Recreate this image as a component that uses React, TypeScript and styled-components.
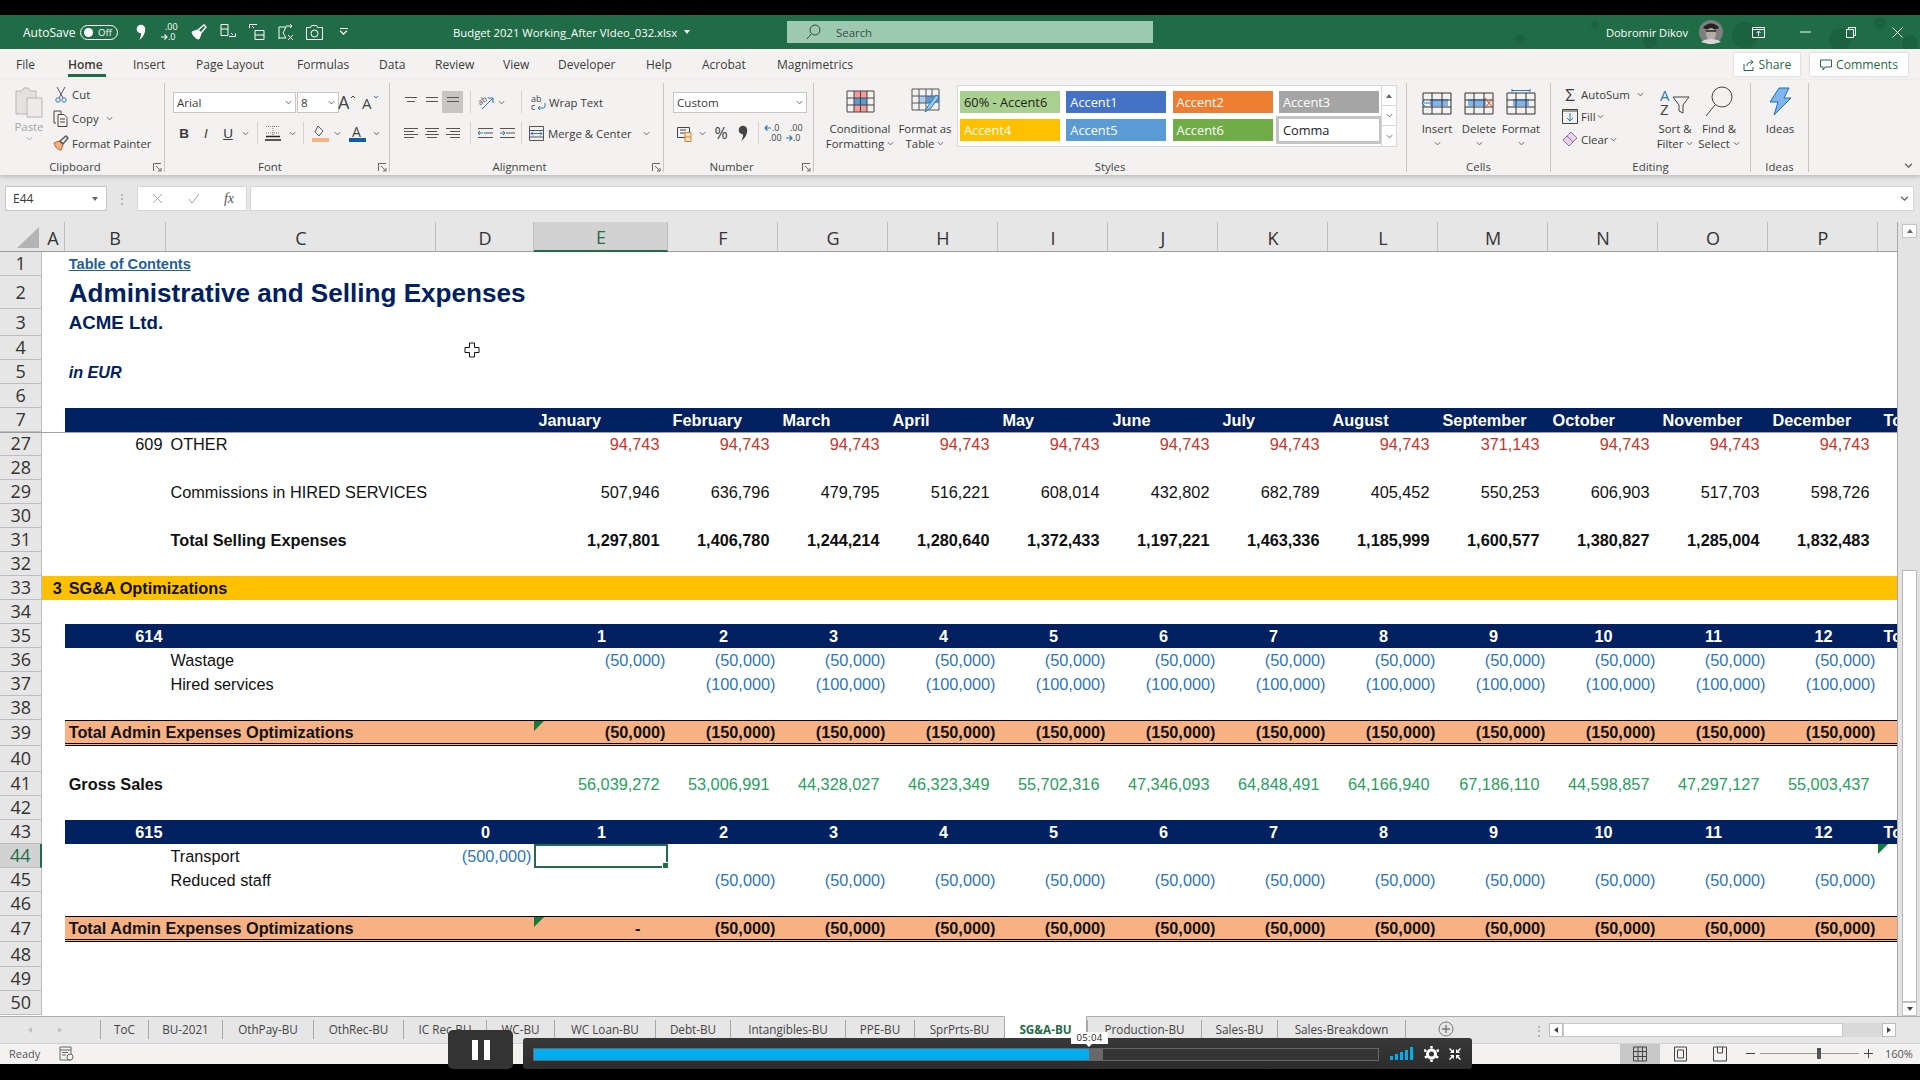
import React from 'react';
import styled, { createGlobalStyle } from 'styled-components';

const UI = `"Open Sans", "Liberation Sans", sans-serif`;
const SHEET = `"Liberation Sans", Arial, sans-serif`;
const COLS = '22.3px 101.8px 270px 98px 134px repeat(11, 110px) 19.5px';
const BAND_COLS = '101.8px 270px 98px 134px repeat(11, 110px) 19.5px';

const GlobalStyle = createGlobalStyle`
  html, body { margin: 0; padding: 0; background: #000; }
  * { box-sizing: border-box; }
`;

const Page = styled.div`
  position: relative;
  width: 1920px;
  height: 1080px;
  overflow: hidden;
  display: flex;
  flex-direction: column;
  background: #000;
  padding: 15px 0 17px;
  font-family: ${UI};
  color: #3b3a39;
`;

// title bar
const TitleBar = styled.header`
  position: relative;
  flex: 0 0 34px;
  display: flex;
  align-items: center;
  background: #1f6c46;
  color: #fff;
  font-size: 11.4px;
`;
const Doodles = styled.svg`
  position: absolute;
  right: 0;
  top: 0;
`;
const AutoSave = styled.div`
  margin-left: 23px;
  width: 57px;
  font-size: 12px;
`;
const Toggle = styled.div`
  width: 38px;
  height: 15px;
  border: 1px solid #fff;
  border-radius: 8px;
  display: flex;
  align-items: center;
  padding-left: 3px;
  gap: 5px;
  font-size: 9.5px;
  &::before {
    content: '';
    width: 9px;
    height: 9px;
    border-radius: 50%;
    background: #fff;
  }
`;
const QuickIcons = styled.div`
  margin-left: 8px;
  display: flex;
  align-items: center;
`;
const QuickSlot = styled.div`
  width: 29px;
  display: flex;
  flex-direction: column;
  align-items: center;
`;
const QatBar = styled.div`
  width: 8px;
  height: 1px;
  background: #fff;
  margin-bottom: -1px;
`;
const FileName = styled.div`
  margin-left: 95px;
  width: 245px;
  display: flex;
  align-items: center;
  gap: 6px;
  font-size: 11.3px;
  white-space: nowrap;
`;
const SearchBox = styled.div`
  margin-left: 89px;
  width: 366px;
  height: 22px;
  background: #9ec9b1;
  color: #33513f;
  display: flex;
  align-items: center;
  padding-left: 19px;
  gap: 15px;
  font-size: 11.4px;
  position: relative;
`;
const UserArea = styled.div`
  margin-left: auto;
  display: flex;
  align-items: center;
  position: relative;
  padding-right: 11px;
`;
const UserName = styled.div`
  font-size: 11.1px;
  margin-right: 11px;
  white-space: nowrap;
`;
const WinSlot = styled.div<{ $w: number }>`
  width: ${p => p.$w}px;
  display: flex;
  justify-content: center;
`;

// tab strip
const TabStrip = styled.nav`
  flex: 0 0 31px;
  background: #f3f2f1;
  display: flex;
  align-items: center;
  padding-left: 16px;
  font-size: 12px;
  position: relative;
`;
const MenuTab = styled.div<{ $w: number; $active?: boolean }>`
  width: ${p => p.$w}px;
  flex: none;
  height: 100%;
  display: flex;
  align-items: center;
  white-space: nowrap;
  position: relative;
  ${p => p.$active && `
    font-weight: 600;
    &::after {
      content: '';
      position: absolute;
      left: 0;
      width: 38px;
      bottom: 3px;
      height: 3px;
      background: #1f6c46;
    }
  `}
`;
const ShareBtn = styled.div<{ $w: number; $ml: number }>`
  width: ${p => p.$w}px;
  margin-left: ${p => p.$ml}px;
  height: 23px;
  flex: none;
  background: #fff;
  box-shadow: 0 0 2px rgba(0, 0, 0, 0.2);
  color: #1f6c46;
  font-size: 12.2px;
  display: flex;
  align-items: center;
  justify-content: center;
  gap: 4px;
`;

// ribbon
const Ribbon = styled.section`
  flex: 0 0 95px;
  background: #f3f2f1;
  padding-top: 3px;
  display: flex;
  box-shadow: 0 2px 4px rgba(0, 0, 0, 0.18);
  position: relative;
  z-index: 2;
  font-size: 11.4px;
  white-space: nowrap;
`;
const GroupBox = styled.div<{ $w: number; $line?: boolean }>`
  width: ${p => p.$w}px;
  height: 89px;
  flex: none;
  display: flex;
  flex-direction: column;
  border-right: ${p => (p.$line === false ? 'none' : '1px solid #c8c6c4')};
`;
const GroupBody = styled.div<{ $pl?: number }>`
  height: 79px;
  display: flex;
  padding-left: ${p => p.$pl ?? 0}px;
`;
const LabelRow = styled.div`
  height: 10px;
  line-height: 10px;
  display: flex;
  align-items: center;
  color: #444;
`;
const LabelText = styled.div`
  flex: 1;
  text-align: center;
`;
const Launcher = styled.div`
  width: 14px;
  display: flex;
  justify-content: center;
`;
const PasteCol = styled.div`
  width: 50px;
  padding: 4px 0 0 8px;
  display: flex;
  flex-direction: column;
  align-items: center;
  color: #a6a6a6;
  line-height: 15px;
  gap: 1px;
`;
const MiniCol = styled.div<{ $w?: number; $gap: number }>`
  ${p => p.$w && `width: ${p.$w}px;`}
  flex: none;
  display: flex;
  flex-direction: column;
  gap: ${p => p.$gap}px;
`;
const MiniRow = styled.div`
  height: 22px;
  display: flex;
  align-items: center;
`;
const Slot = styled.div<{ $w: number }>`
  width: ${p => p.$w}px;
  flex: none;
  display: flex;
  justify-content: center;
  align-items: center;
  svg { flex: none; }
`;
const StyleLetter = styled(Slot)`
  font-size: 13.5px;
  font-family: ${SHEET};
`;
const Active = styled(Slot)`
  background: #c8c6c4;
  height: 22px;
`;
const FixedText = styled.div<{ $w: number }>`
  width: ${p => p.$w}px;
  flex: none;
`;
const Sep = styled.div<{ $l: number; $r: number }>`
  width: 1px;
  height: 22px;
  background: #d4d2d0;
  flex: none;
  margin: 0 ${p => p.$r}px 0 ${p => p.$l}px;
`;
const ControlStack = styled.div<{ $pt: number; $gap: number }>`
  padding-top: ${p => p.$pt}px;
  display: flex;
  flex-direction: column;
  gap: ${p => p.$gap}px;
`;
const Select = styled.div<{ $w: number; $mr?: number }>`
  width: ${p => p.$w}px;
  margin-right: ${p => p.$mr ?? 0}px;
  height: 21px;
  flex: none;
  background: #fff;
  border: 1px solid #c8c6c4;
  display: flex;
  align-items: center;
  justify-content: space-between;
  padding: 0 3px;
  font-size: 11.6px;
`;
const BigBtn = styled.div<{ $w: number }>`
  width: ${p => p.$w}px;
  flex: none;
  display: flex;
  flex-direction: column;
  align-items: center;
  line-height: 15px;
`;
const BigIcon = styled.div`
  height: 37.5px;
  display: flex;
  align-items: center;
  justify-content: center;
`;
const BigLine = styled.div`
  height: 15px;
  display: flex;
  align-items: center;
  gap: 3px;
`;
const Gallery = styled.div`
  width: 440px;
  height: 62px;
  margin: 2px 0 0 1px;
  background: #fff;
  border: 1px solid #dad8d6;
  display: flex;
  justify-content: space-between;
  padding: 5px 0 0 2px;
`;
const GalleryGrid = styled.div`
  display: grid;
  grid-template-columns: repeat(4, 100px);
  grid-auto-rows: 22px;
  gap: 5.5px 6.3px;
`;
const StyleCell = styled.div<{ $bg: string; $dark?: boolean; $picked?: boolean }>`
  background: ${p => p.$bg};
  color: ${p => (p.$dark ? '#1d1d1d' : '#fff')};
  font-size: 12.8px;
  display: flex;
  align-items: center;
  padding-left: 4px;
  ${p => p.$picked && `outline: 3px solid #c4c4c4; outline-offset: 0;`}
`;
const Spin = styled.div`
  width: 15px;
  margin-top: -5px;
  display: flex;
  flex-direction: column;
  border-left: 1px solid #dad8d6;
`;
const SpinBtn = styled.div`
  height: 20px;
  border-bottom: 1px solid #dad8d6;
  display: flex;
  align-items: center;
  justify-content: center;
  &:last-child { border-bottom: none; }
`;
const Collapse = styled.div`
  position: absolute;
  right: 7px;
  bottom: 2px;
`;

// formula bar
const FormulaBar = styled.div`
  flex: 0 0 47px;
  background: #e6e6e6;
  display: flex;
  align-items: center;
  padding: 0 6px 0 5px;
  font-size: 12px;
`;
const NameBox = styled.div`
  width: 102px;
  height: 25px;
  background: #fff;
  border: 1px solid #c6c6c6;
  display: flex;
  align-items: center;
  justify-content: space-between;
  padding: 0 7px;
`;
const Dots = styled.div`
  width: 30px;
  text-align: center;
  color: #9a9a9a;
  letter-spacing: 0;
`;
const FxBox = styled.div`
  width: 110px;
  height: 25px;
  background: #fff;
  border: 1px solid #d6d6d6;
  display: flex;
  align-items: center;
`;
const FxMark = styled.span`
  font-family: "Liberation Serif", serif;
  font-style: italic;
  font-size: 14px;
  color: #555;
`;
const FormulaInput = styled.div`
  margin-left: 3px;
  flex: 1;
  height: 25px;
  background: #fff;
  border: 1px solid #d6d6d6;
  display: flex;
  align-items: center;
  justify-content: flex-end;
  padding-right: 4px;
`;

// sheet
const Sheet = styled.main`
  flex: 0 0 793.6px;
  display: grid;
  grid-template-columns: 1fr 22px;
  grid-template-rows: minmax(0, 1fr);
  background: #fff;
  min-height: 0;
`;
const Grid = styled.div`
  display: flex;
  flex-direction: column;
  overflow: hidden;
  min-height: 0;
  border-right: 1px solid #a8a8a8;
  font-family: ${SHEET};
  font-size: 16.3px;
  color: #111;
`;
const ColHead = styled.div`
  flex: 0 0 29.6px;
  min-height: 0;
  display: flex;
  background: #e6e6e6;
  border-bottom: 1px solid #9f9f9f;
  font-family: ${UI};
  font-size: 18px;
  line-height: 1;
`;
const Corner = styled.div`
  width: 42.4px;
  flex: none;
  display: flex;
  justify-content: flex-end;
  padding: 5px 3px 0 0;
`;
const ColLetters = styled.div`
  flex: 1;
  display: grid;
  grid-template-columns: ${COLS};
`;
const Letter = styled.div<{ $on?: boolean }>`
  display: flex;
  align-items: center;
  justify-content: center;
  padding-top: 3px;
  border-right: 1px solid #bdbdbd;
  color: ${p => (p.$on ? '#1f6c46' : '#333')};
  ${p => p.$on && `background: #d2d2d2; border-bottom: 2px solid #1f6c46; margin-bottom: -1px;`}
`;
const RowLine = styled.div<{ $h: number; $freeze?: boolean }>`
  flex: 0 0 ${p => p.$h}px;
  min-height: 0;
  display: flex;
  line-height: 1;
  ${p => p.$freeze && `box-shadow: 0 1px 0 #9f9f9f; z-index: 1;`}
`;
const RowNum = styled.div<{ $on?: boolean }>`
  width: 42.4px;
  flex: none;
  background: ${p => (p.$on ? '#d2d2d2' : '#e6e6e6')};
  color: ${p => (p.$on ? '#1f6c46' : '#333')};
  border-bottom: 1px solid #bdbdbd;
  border-right: ${p => (p.$on ? '2px solid #1f6c46' : '1px solid #bdbdbd')};
  font-family: ${UI};
  font-size: 18px;
  display: flex;
  align-items: center;
  justify-content: center;
`;
const ACell = styled.div<{ $fill?: boolean }>`
  width: 22.3px;
  flex: none;
  display: flex;
  align-items: center;
  justify-content: flex-end;
  padding: 1px 3px 0 0;
  font-weight: 700;
  ${p => p.$fill && `background: #ffc000;`}
`;
type Tone = 'navy' | 'orange' | 'amber';
const Band = styled.div<{ $tone?: Tone }>`
  flex: 1;
  display: grid;
  grid-template-columns: ${BAND_COLS};
  grid-template-rows: minmax(0, 1fr);
  align-items: stretch;
  overflow: hidden;
  ${p => p.$tone === 'navy' && `background: #002060; color: #fff; font-weight: 700;`}
  ${p => p.$tone === 'amber' && `background: #ffc000; font-weight: 700;`}
  ${p => p.$tone === 'orange' && `
    background: #f8b183;
    font-weight: 700;
    border-top: 1px solid #000;
    border-bottom: 3px double #000;
  `}
`;
const Cell = styled.div<{ $align?: 'left' | 'right' | 'center'; $pad?: number; $color?: string; $bold?: boolean; $flag?: boolean; $picked?: boolean }>`
  position: relative;
  display: flex;
  align-items: center;
  white-space: nowrap;
  min-width: 0;
  padding-top: 2px;
  justify-content: ${p => (p.$align === 'right' ? 'flex-end' : p.$align === 'center' ? 'center' : 'flex-start')};
  ${p => (p.$align === 'right' ? `padding-right: ${p.$pad ?? 4}px;` : p.$align === 'center' ? '' : `padding-left: ${p.$pad ?? 4}px;`)}
  ${p => p.$color && `color: ${p.$color};`}
  ${p => p.$bold && `font-weight: 700;`}
  ${p => p.$flag && `
    &::before {
      content: '';
      position: absolute;
      left: 0;
      top: 0;
      border-style: solid;
      border-width: 10px 10px 0 0;
      border-color: #107c3a transparent transparent transparent;
    }
  `}
  ${p => p.$picked && `
    border: 2px solid #1f6c46;
    &::after {
      content: '';
      position: absolute;
      right: -3px;
      bottom: -3px;
      width: 5px;
      height: 5px;
      background: #1f6c46;
      border: 1px solid #fff;
    }
  `}
`;
const TocLink = styled.span`
  color: #1f5f9e;
  font-weight: 700;
  font-size: 14.6px;
  text-decoration: underline;
`;
const SheetTitle = styled.span`
  color: #002060;
  font-weight: 700;
  font-size: 26.1px;
`;
const SubTitle = styled.span`
  color: #002060;
  font-weight: 700;
  font-size: 18.7px;
`;
const Unit = styled.span`
  color: #002060;
  font-weight: 700;
  font-style: italic;
  font-size: 16.2px;
`;
const VScroll = styled.div`
  background: #e3e3e3;
  display: flex;
  flex-direction: column;
  padding: 2px 3px 0 4px;
`;
const ScrollBtn = styled.div`
  height: 14px;
  background: #fff;
  border: 1px solid #c4c4c4;
  flex: none;
  display: flex;
  align-items: center;
  justify-content: center;
`;
const VGap = styled.div<{ $h: number }>`
  flex: 0 0 ${p => p.$h}px;
`;
const VThumb = styled.div`
  flex: 1;
  background: #fff;
  border: 1px solid #b8b8b8;
`;

// sheet tabs
const SheetTabs = styled.div`
  flex: 0 0 28px;
  background: #e6e6e6;
  border-top: 1px solid #ababab;
  border-bottom: 1px solid #d0d0d0;
  display: flex;
  align-items: stretch;
  font-size: 11.7px;
  color: #444;
`;
const TabNav = styled.div`
  width: 100px;
  flex: none;
  display: flex;
  align-items: center;
  padding-left: 26px;
  gap: 22px;
`;
const SheetTab = styled.div<{ $w: number; $on?: boolean }>`
  width: ${p => p.$w}px;
  flex: none;
  display: flex;
  align-items: center;
  justify-content: center;
  white-space: nowrap;
  border-left: 1px solid #a8a8a8;
  ${p => p.$on
    ? `background: #fff; color: #1f6c46; font-weight: 700; margin-top: -1px; padding-bottom: 2px; border-right: 1px solid #a8a8a8; border-top: 1px solid #fff;`
    : `margin: 3px 0 4px;`}
`;
const AddSheet = styled.div`
  width: 128px;
  flex: none;
  display: flex;
  align-items: center;
  padding-left: 32px;
  border-left: 1px solid #a8a8a8;
  margin: 3px 0 4px;
`;
const SplitDots = styled.div`
  width: 15px;
  flex: none;
  color: #9a9a9a;
  display: flex;
  align-items: center;
`;
const HScroll = styled.div`
  margin: 6px 0 6px 1px;
  width: 347px;
  display: flex;
  background: #d9d9d9;
`;
const HBtn = styled.div`
  width: 14px;
  flex: none;
  background: #fff;
  border: 1px solid #bcbcbc;
  display: flex;
  align-items: center;
  justify-content: center;
`;
const HThumb = styled.div`
  width: 280px;
  background: #fff;
  border: 1px solid #c8c8c8;
`;
const HRest = styled.div`
  flex: 1;
`;

// status bar
const StatusBar = styled.footer`
  flex: 0 0 20px;
  background: #f3f2f1;
  display: flex;
  align-items: center;
  padding-left: 9px;
  font-size: 11px;
  color: #555;
`;
const ViewBtn = styled.div<{ $on?: boolean; $w: number }>`
  width: ${p => p.$w}px;
  height: 20px;
  flex: none;
  display: flex;
  align-items: center;
  justify-content: center;
  ${p => p.$on && `background: #c8c8c8;`}
`;
const StatusRight = styled.div`
  margin-left: auto;
  display: flex;
  align-items: center;
`;
const ZoomMinus = styled.svg`
  margin-left: 5.5px;
`;
const ZoomTrack = styled.div`
  width: 99px;
  height: 1px;
  background: #999;
  position: relative;
  margin: 0 5px;
  &::after {
    content: '';
    position: absolute;
    left: 57px;
    top: -5px;
    width: 4px;
    height: 11px;
    background: #555;
  }
`;
const ZoomPct = styled.div`
  margin-left: 12.5px;
  width: 35px;
`;

// recording player on top
const PauseBtn = styled.div`
  position: absolute;
  left: 448px;
  top: 1030px;
  width: 65px;
  height: 39px;
  background: #333;
  border-radius: 5px;
  z-index: 5;
  display: flex;
  justify-content: center;
  align-items: center;
  gap: 6px;
  i {
    width: 6px;
    height: 20px;
    background: #fff;
  }
`;
const Player = styled.div`
  position: absolute;
  left: 523px;
  top: 1038px;
  width: 949px;
  height: 31px;
  background: linear-gradient(#383838, #2c2c2c);
  border-radius: 3px;
  z-index: 5;
  display: flex;
  align-items: center;
  padding-left: 10px;
`;
const Track = styled.div`
  position: relative;
  width: 846px;
  height: 13px;
  border: 1px solid #666;
  background: #343434;
  display: flex;
  margin-top: 1px;
`;
const Played = styled.div`
  background: #00adef;
`;
const Buffered = styled.div`
  background: #686868;
`;
const TimeTip = styled.div`
  position: absolute;
  left: 537px;
  top: -17px;
  width: 37px;
  height: 12px;
  background: #fff;
  color: #222;
  font-size: 9.6px;
  line-height: 12px;
  text-align: center;
  letter-spacing: 0.3px;
  &::after {
    content: '';
    position: absolute;
    left: 15px;
    top: 12px;
    border-style: solid;
    border-width: 3px 3px 0 3px;
    border-color: #fff transparent transparent transparent;
  }
`;
const PlayerIcons = styled.div`
  display: flex;
  align-items: center;
  margin-left: 11px;
  gap: 10px;
`;
const Pointer = styled.svg`
  position: absolute;
  left: 464px;
  top: 342px;
  z-index: 4;
`;

// icons
const Chev = ({ c = '#605e5c', s = 7 }: { c?: string; s?: number }) => (
  <svg width={s} height={s} viewBox="0 0 8 8"><path d="M1 2.5l3 3 3-3" fill="none" stroke={c} strokeWidth="1.1" /></svg>
);
const CommaMark = ({ c = '#444', h = 17 }: { c?: string; h?: number }) => (
  <svg width={h * 0.7} height={h} viewBox="0 0 14 20"><circle cx="7" cy="6" r="5" fill={c} /><path d="M12 6c0 6-3 10-7 13 2-4 2.5-7 2-9z" fill={c} /></svg>
);
const DecMark = ({ c = '#444', arrow = '#2e75b6', flip = false }: { c?: string; arrow?: string; flip?: boolean }) => (
  <svg width="20" height="20" viewBox="0 0 20 20" fontFamily={UI} fontSize="9" fill={c}>
    {flip ? (
      <>
        <text x="8" y="8">.0</text><text x="5" y="18">.00</text>
        <path d="M7 5H1m2.500-2.500L1 5l2.500 2.500" fill="none" stroke={arrow} strokeWidth="1.2" />
      </>
    ) : (
      <>
        <text x="5" y="8">.00</text><text x="8" y="18">.0</text>
        <path d="M1 15h6M4.500 12.500L7 15l-2.500 2.500" fill="none" stroke={arrow} strokeWidth="1.2" />
      </>
    )}
  </svg>
);
const Brush = ({ c = '#fff', tip }: { c?: string; tip?: string }) => (
  <svg width="18" height="18" viewBox="0 0 18 18">
    <path d="M2 9l5-2 4 4-2 5C6 16 3 13 2 9z" fill={tip ?? c} stroke={tip ? '#c55a11' : c} />
    <path d="M8 7l6-5 2 2-5 6z" fill="none" stroke={tip ? '#555' : c} strokeWidth="1.4" />
  </svg>
);
const WhiteBoxes = ({ kind }: { kind: number }) => (
  <svg width="18" height="18" viewBox="0 0 18 18" fill="none" stroke="#fff" strokeWidth="1">
    {kind === 0 && <><path d="M2 1.500h7v11H2z" /><path d="M2 6h7" /><path d="M10 13.500h6.500v-3M12 10l2 2" /></>}
    {kind === 1 && <><path d="M7 7.500h9v9H7zM7 12h9" /><path d="M1.500 5V1.500H9M4 3l2 2" /></>}
    {kind === 2 && <><path d="M2 4v12M2 4h7l-3 6 3 5H2" /><path d="M11 12l5 5m0-5l-5 5M9 3h6m-2-2l2 2-2 2" /></>}
  </svg>
);
const Camera = () => (
  <svg width="17" height="15" viewBox="0 0 17 15" fill="none" stroke="#fff"><path d="M.500 2.500h4l1-2h5l1 2h5v12H.500z" /><circle cx="8.500" cy="8.500" r="3.500" /></svg>
);
const Scissors = () => (
  <svg width="12" height="17" viewBox="0 0 12 17" fill="none"><path d="M2 1l6 11M10 1L4 12" stroke="#555" /><circle cx="3" cy="14" r="2.200" stroke="#2e75b6" /><circle cx="9" cy="14" r="2.200" stroke="#2e75b6" /></svg>
);
const CopyIcon = () => (
  <svg width="17" height="17" viewBox="0 0 17 17" fill="none" stroke="#444"><path d="M3 13H1V1h7v3" /><path d="M5 4.500h6l3 3v9H5zM7 9h5M7 12h5" /></svg>
);
const PasteIcon = () => (
  <svg width="28" height="31" viewBox="0 0 28 31" fill="#e4e2e0" stroke="#b8b6b4"><path d="M1 4h6l2-3h4l2 3h6v23H1z" /><path d="M12 11h15v19H12z" fill="#ecebea" /></svg>
);
const LauncherIcon = () => (
  <svg width="9" height="9" viewBox="0 0 9 9" fill="none" stroke="#666"><path d="M.500 8V.500H8M3 3l5 5M8 5v3H5" /></svg>
);
const FontGrow = ({ up }: { up: boolean }) => (
  <svg width="20" height="18" viewBox="0 0 20 18" fontFamily={UI}>
    <text x="0" y="16" fontSize={up ? 18 : 15} fill="#444">A</text>
    <path d={up ? 'M13 5l2-2 2 2' : 'M12 3l2 2 2-2'} fill="none" stroke={up ? '#444' : '#2e75b6'} />
  </svg>
);
const BorderIcon = () => (
  <svg width="16" height="16" viewBox="0 0 16 16"><path d="M1 1.500h14M1 8h14M8 1v10" stroke="#777" strokeDasharray="1 1" /><path d="M1 11.500h14M0 15h16" stroke="#222" strokeWidth="1.500" /></svg>
);
const FillIcon = () => (
  <svg width="17" height="17" viewBox="0 0 17 17"><path d="M6 1l5 5-4 5-4-4z" fill="none" stroke="#555" /><rect y="13" width="17" height="4" fill="#f4b183" /></svg>
);
const ColorIcon = () => (
  <svg width="17" height="17" viewBox="0 0 17 17" fontFamily={UI}><text x="3" y="12" fontSize="14" fill="#444">A</text><rect y="13" width="17" height="4" fill="#0f5ba7" /></svg>
);
const AlignLines = ({ widths, off }: { widths: number[]; off: 'l' | 'c' | 'r' }) => (
  <svg width="14" height="14" viewBox="0 0 14 14" stroke="#555">
    {widths.map((w, i) => {
      const x = off === 'l' ? 0 : off === 'r' ? 14 - w : (14 - w) / 2;
      return <path key={i} d={`M${x} ${2.5 + i * (widths.length > 2 ? 3 : 4)}h${w}`} />;
    })}
  </svg>
);
const OrientIcon = () => (
  <svg width="17" height="17" viewBox="0 0 17 17" fontFamily={UI}><text x="0" y="9" fontSize="8" fill="#444" transform="rotate(-35 5 7)">ab</text><path d="M4 15L15 4m-5 0h5v5" fill="none" stroke="#2e75b6" /></svg>
);
const WrapIcon = () => (
  <svg width="15" height="17" viewBox="0 0 15 17" fontFamily={UI}><text x="0" y="8" fontSize="9" fill="#444">ab</text><text x="0" y="16" fontSize="9" fill="#444">c</text><path d="M14 9v3a2 2 0 0 1-2 2H7m2-2l-2 2 2 2" fill="none" stroke="#2e75b6" /></svg>
);
const MergeIcon = () => (
  <svg width="15" height="15" viewBox="0 0 15 15" fill="none"><path d="M.500.500h14v14H.500z" stroke="#555" /><path d="M.500 4.500h14M.500 11h14" stroke="#555" /><path d="M2 7.500h11M4 5.500l-2 2 2 2M11 5.500l2 2-2 2" stroke="#2e75b6" /></svg>
);
const IndentIcon = ({ rev }: { rev?: boolean }) => (
  <svg width="15" height="14" viewBox="0 0 15 14" fill="none">
    <path d="M6 7h9M0 2.500h15M0 11.500h15" stroke="#555" />
    <path d={rev ? 'M5 7H0m2-2L0 7l2 2' : 'M0 7h5M3 5l2 2-2 2'} stroke="#2e75b6" />
  </svg>
);
const Accounting = () => (
  <svg width="15" height="17" viewBox="0 0 15 17" fill="none"><path d="M.500 2.500h12v10H.500zM3 5h6M3 8h6" stroke="#444" /><path d="M8 7.500h6v9H8z" fill="#fbe3c9" stroke="#d9822b" /><path d="M8 12h6" stroke="#d9822b" /></svg>
);
const CondIcon = () => (
  <svg width="29" height="23" viewBox="0 0 29 23">
    <rect x="8" y="1" width="13" height="7" fill="#f69a9a" /><rect x="8" y="8" width="13" height="7" fill="#5b9bd5" /><rect x="8" y="15" width="13" height="7" fill="#f69a9a" />
    <path d="M1 1h27v21H1zM8 1v21M14.500 1v21M21 1v21M1 8h27M1 15h27" fill="none" stroke="#444" />
  </svg>
);
const TableIcon = () => (
  <svg width="29" height="27" viewBox="0 0 29 27">
    <rect x="15" y="8" width="13" height="7" fill="#5b9bd5" /><rect x="8" y="8" width="8" height="7" fill="#a9cdf0" />
    <path d="M1 1h27v21H1zM8 1v21M15 1v21M21 1v7M1 8h27M1 15h20" fill="none" stroke="#555" />
    <path d="M14 24l3-6 8-11 3 2-8 11z" fill="#9ec5e8" stroke="#2e75b6" />
  </svg>
);
const CellsIcon = ({ kind }: { kind: 'insert' | 'delete' | 'format' }) => (
  <svg width="32" height="26" viewBox="0 0 32 26">
    {kind === 'format' && <path d="M7 1.500h18M7 0v3M25 0v3" stroke="#2e75b6" fill="none" />}
    <rect x={kind === 'insert' ? 9 : kind === 'delete' ? 5 : 8} y="10" width={kind === 'format' ? 16 : 18} height="7" fill="#7fb5ec" />
    <path d="M2 4h28v21H2zM11 4v21M21 4v21M2 11h28M2 18h28" fill="none" stroke="#333" />
    {kind === 'insert' && <path d="M10 14H1m4-4l-4 4 4 4" fill="#fff" stroke="#2e75b6" />}
    {kind === 'delete' && <path d="M22 9l8 10m0-10l-8 10" stroke="#e0603a" strokeWidth="1.200" fill="none" />}
  </svg>
);
const FillDown = () => (
  <svg width="16" height="15" viewBox="0 0 16 15" fill="none"><path d="M.500.500h15v14H.500z" stroke="#444" /><path d="M.500 2h15" stroke="#444" /><path d="M8 4v8M5 9l3 3 3-3" stroke="#2e75b6" /></svg>
);
const Eraser = () => (
  <svg width="16" height="16" viewBox="0 0 16 16"><path d="M1 9l8-8 6 6-8 8z" fill="#e6d4ea" stroke="#9a6aa8" /><path d="M5 5l6 6" stroke="#9a6aa8" /></svg>
);
const SortIcon = () => (
  <svg width="30" height="28" viewBox="0 0 30 28" fontFamily={UI} fontSize="15"><text x="0" y="13" fill="#2e75b6">A</text><text x="0" y="27" fill="#444">Z</text><path d="M13 9h16l-6 8v8l-4-2v-6z" fill="none" stroke="#444" /></svg>
);
const FindIcon = () => (
  <svg width="30" height="31" viewBox="0 0 30 31" fill="none" stroke="#444"><circle cx="18" cy="11" r="10" /><path d="M11 19L2 30" /></svg>
);
const Bolt = () => (
  <svg width="23" height="29" viewBox="0 0 23 29"><path d="M10 1h10l-5 10h7L5 28l4-13H1z" fill="#7fb5ec" stroke="#1f6fb5" /></svg>
);
const Avatar = () => (
  <svg width="24" height="24" viewBox="0 0 24 24">
    <circle cx="12" cy="12" r="12" fill="#7f7f7f" />
    <path d="M4 8c3-6 13-6 16 0-4 2-12 2-16 0z" fill="#222" />
    <ellipse cx="12" cy="14" rx="5" ry="6" fill="#b6aca2" />
    <path d="M7 11h10" stroke="#222" strokeWidth="1.500" />
    <path d="M2 22c4-4 16-4 20 0l-8 2h-4z" fill="#d8d8d8" />
  </svg>
);
const Triangle = ({ dir, c = '#666' }: { dir: 'u' | 'd' | 'l' | 'r'; c?: string }) => {
  const d = { u: 'M1 6l3-4 3 4z', d: 'M1 2l3 4 3-4z', l: 'M6 1L2 4l4 3z', r: 'M2 1l4 3-4 3z' }[dir];
  return <svg width="8" height="8" viewBox="0 0 8 8"><path d={d} fill={c} /></svg>;
};
const SignalBars = () => (
  <svg width="24" height="13" viewBox="0 0 24 13" fill="#00adef">
    <rect x="0" y="9" width="3" height="4" /><rect x="5" y="7" width="3" height="6" /><rect x="10" y="5" width="3" height="8" /><rect x="15" y="3" width="3" height="10" /><rect x="20" y="0" width="3" height="13" />
  </svg>
);
const Gear = () => (
  <svg width="15" height="16" viewBox="0 0 15 16"><circle cx="7.500" cy="8" r="4" fill="none" stroke="#fff" strokeWidth="3" /><path d="M7.500 0v16M0 4l15 8M15 4L0 12" stroke="#fff" strokeWidth="2.500" strokeDasharray="2.500 11 2.500" /></svg>
);
const Shrink = () => (
  <svg width="12" height="12" viewBox="0 0 12 12" fill="#fff"><path d="M0 1l1-1 2.500 2.500L5 1v4H1l1.500-1.500zM12 1l-1-1-2.500 2.500L7 1v4h4L9.500 3.500zM0 11l1 1 2.500-2.500L5 11V7H1l1.500 1.500zM12 11l-1 1-2.500-2.500L7 11V7h4L9.500 8.500z" /></svg>
);

const Group = ({ w, label, launcher, pl, line, children }: { w: number; label: string; launcher?: boolean; pl?: number; line?: boolean; children: React.ReactNode }) => (
  <GroupBox $w={w} $line={line}>
    <GroupBody $pl={pl}>{children}</GroupBody>
    <LabelRow>
      <LabelText>{label}</LabelText>
      {launcher && <Launcher><LauncherIcon /></Launcher>}
    </LabelRow>
  </GroupBox>
);

const Big = ({ w, icon, lines, chev }: { w: number; icon: React.ReactNode; lines: string[]; chev?: boolean }) => (
  <BigBtn $w={w}>
    <BigIcon>{icon}</BigIcon>
    {lines.map((l, i) => (
      <BigLine key={i}>{l}{chev && i === lines.length - 1 && <Chev />}</BigLine>
    ))}
    {!chev && lines.length === 1 && w === 42 && <BigLine><Chev /></BigLine>}
  </BigBtn>
);

const menuTabs: [string, number][] = [
  ['File', 52], ['Home', 65], ['Insert', 63], ['Page Layout', 101], ['Formulas', 82], ['Data', 56], ['Review', 68],
  ['View', 55], ['Developer', 88], ['Help', 56], ['Acrobat', 75], ['Magnimetrics', 100],
];
const styleCells: { t: string; bg: string; dark?: boolean; picked?: boolean }[] = [
  { t: '60% - Accent6', bg: '#a9d08e', dark: true }, { t: 'Accent1', bg: '#4472c4' }, { t: 'Accent2', bg: '#ed7d31' }, { t: 'Accent3', bg: '#a5a5a5' },
  { t: 'Accent4', bg: '#ffc000' }, { t: 'Accent5', bg: '#5b9bd5' }, { t: 'Accent6', bg: '#70ad47' }, { t: 'Comma', bg: '#fff', dark: true, picked: true },
];
const sheetTabs: [string, number][] = [
  ['ToC', 48], ['BU-2021', 74], ['OthPay-BU', 91], ['OthRec-BU', 90], ['IC Rec-BU', 83], ['WC-BU', 68], ['WC Loan-BU', 101],
  ['Debt-BU', 75], ['Intangibles-BU', 115], ['PPE-BU', 69], ['SprPrts-BU', 90], ['SG&A-BU', 83], ['Production-BU', 114], ['Sales-BU', 76], ['Sales-Breakdown', 128],
];
const letters = ['A', 'B', 'C', 'D', 'E', 'F', 'G', 'H', 'I', 'J', 'K', 'L', 'M', 'N', 'O', 'P'];
const months = ['January', 'February', 'March', 'April', 'May', 'June', 'July', 'August', 'September', 'October', 'November', 'December'];
const red = '#c8342a';
const blue = '#2e75b6';
const green = '#27a060';

const otherRow = months.map((_, i) => (i === 8 ? '371,143' : '94,743'));
const hiredRow = ['507,946', '636,796', '479,795', '516,221', '608,014', '432,802', '682,789', '405,452', '550,253', '606,903', '517,703', '598,726'];
const totalRow = ['1,297,801', '1,406,780', '1,244,214', '1,280,640', '1,372,433', '1,197,221', '1,463,336', '1,185,999', '1,600,577', '1,380,827', '1,285,004', '1,832,483'];
const salesRow = ['56,039,272', '53,006,991', '44,328,027', '46,323,349', '55,702,316', '47,346,093', '64,848,491', '64,166,940', '67,186,110', '44,598,857', '47,297,127', '55,003,437'];
const repeat = (v: string, first = v) => months.map((_, i) => (i === 0 ? first : v));

// B, C, D cells then E..P values
const Numbers = ({ values, color, pad = 9, bold }: { values: string[]; color?: string; pad?: number; bold?: boolean }) => (
  <>
    {values.map((v, i) => (
      <Cell key={i} $align="right" $pad={pad} $color={color} $bold={bold}>{v}</Cell>
    ))}
  </>
);
const HeaderNumbers = () => (
  <>
    {months.map((_, i) => <Cell key={i} $align="center">{i + 1}</Cell>)}
    <Cell $pad={5}>Total</Cell>
  </>
);
const Line = ({ n, h = 24, on, fillA, aText, tone, freeze, children }: { n: number; h?: number; on?: boolean; fillA?: boolean; aText?: string; tone?: Tone; freeze?: boolean; children?: React.ReactNode }) => (
  <RowLine $h={h} $freeze={freeze}>
    <RowNum $on={on}>{n}</RowNum>
    <ACell $fill={fillA}>{aText}</ACell>
    <Band $tone={tone}>{children}</Band>
  </RowLine>
);

const App = () => {
  return (
    <Page>
      <GlobalStyle />
      <TitleBar>
        <Doodles width="420" height="34" viewBox="0 0 420 34" fill="#195c3b" opacity="0.55">
          <circle cx="20" cy="24" r="5" /><circle cx="95" cy="10" r="4" /><circle cx="150" cy="26" r="7" /><circle cx="245" cy="20" r="13" />
          <circle cx="340" cy="24" r="11" /><circle cx="380" cy="8" r="6" /><circle cx="410" cy="28" r="8" />
        </Doodles>
        <AutoSave>AutoSave</AutoSave>
        <Toggle>Off</Toggle>
        <QuickIcons>
          <QuickSlot><CommaMark c="#fff" /></QuickSlot>
          <QuickSlot><DecMark c="#fff" arrow="#fff" /></QuickSlot>
          <QuickSlot><Brush /></QuickSlot>
          <QuickSlot><WhiteBoxes kind={0} /></QuickSlot>
          <QuickSlot><WhiteBoxes kind={1} /></QuickSlot>
          <QuickSlot><WhiteBoxes kind={2} /></QuickSlot>
          <QuickSlot><Camera /></QuickSlot>
          <QuickSlot><QatBar /><Chev c="#fff" s={9} /></QuickSlot>
        </QuickIcons>
        <FileName>Budget 2021 Working_After VIdeo_032.xlsx<Triangle dir="d" c="#fff" /></FileName>
        <SearchBox>
          <svg width="15" height="16" viewBox="0 0 15 16" fill="none" stroke="#33513f"><circle cx="9" cy="6" r="5" /><path d="M5 10l-4 5" /></svg>
          Search
        </SearchBox>
        <UserArea>
          <UserName>Dobromir Dikov</UserName>
          <Avatar />
          <WinSlot $w={70}>
            <svg width="13" height="11" viewBox="0 0 13 11" fill="none" stroke="#fff"><path d="M.500.500h12v10H.500zM.500 2.500h12M6.500 9V4.500M4.500 6l2-2 2 2" /></svg>
          </WinSlot>
          <WinSlot $w={24}>
            <svg width="11" height="2" viewBox="0 0 11 2"><path d="M0 1h11" stroke="#fff" /></svg>
          </WinSlot>
          <WinSlot $w={68}>
            <svg width="10" height="11" viewBox="0 0 10 11" fill="none" stroke="#fff"><path d="M.500 2.500h7v8h-7zM2.500 2.500v-2h7v8h-2" /></svg>
          </WinSlot>
          <WinSlot $w={24}>
            <svg width="11" height="11" viewBox="0 0 11 11" stroke="#fff"><path d="M.500.500l10 10m0-10l-10 10" /></svg>
          </WinSlot>
        </UserArea>
      </TitleBar>

      <TabStrip>
        {menuTabs.map(([t, w]) => (
          <MenuTab key={t} $w={w} $active={t === 'Home'}>{t}</MenuTab>
        ))}
        <ShareBtn $w={66} $ml={857}>
          <svg width="12" height="12" viewBox="0 0 12 12" fill="none" stroke="#1f6c46"><path d="M1 5v6.500h9V8M4 7c0-3 2-4 5-4M7.500 1L10 3 7.500 5.500" /></svg>
          Share
        </ShareBtn>
        <ShareBtn $w={98} $ml={10}>
          <svg width="12" height="12" viewBox="0 0 12 12" fill="none" stroke="#1f6c46"><path d="M.500 1h11v7H5L3 11V8H.500z" /></svg>
          Comments
        </ShareBtn>
      </TabStrip>

      <Ribbon>
        <Group w={165} label="Clipboard" launcher>
          <PasteCol>
            <PasteIcon />
            Paste
            <Chev c="#a6a6a6" />
          </PasteCol>
          <MiniCol $gap={2.5}>
            <MiniRow><Slot $w={22}><Scissors /></Slot>Cut</MiniRow>
            <MiniRow><Slot $w={22}><CopyIcon /></Slot>Copy<Slot $w={22}><Chev /></Slot></MiniRow>
            <MiniRow><Slot $w={22}><Brush c="#666" tip="#f4b183" /></Slot>Format Painter</MiniRow>
          </MiniCol>
        </Group>

        <Group w={225} label="Font" launcher pl={8}>
          <ControlStack $pt={8} $gap={9}>
            <MiniRow>
              <Select $w={123} $mr={1}>Arial<Chev /></Select>
              <Select $w={42}>8<Chev /></Select>
              <Slot $w={18}><FontGrow up /></Slot>
              <Slot $w={30}><FontGrow up={false} /></Slot>
            </MiniRow>
            <MiniRow>
              <StyleLetter $w={22}><b>B</b></StyleLetter>
              <StyleLetter $w={22}><i>I</i></StyleLetter>
              <StyleLetter $w={22}><u>U</u></StyleLetter>
              <Slot $w={12}><Chev /></Slot>
              <Sep $l={6} $r={7} />
              <Slot $w={16}><BorderIcon /></Slot>
              <Slot $w={22}><Chev /></Slot>
              <Sep $l={0} $r={1} />
              <Slot $w={30}><FillIcon /></Slot>
              <Slot $w={5}><Chev /></Slot>
              <Slot $w={34}><ColorIcon /></Slot>
              <Slot $w={4}><Chev /></Slot>
            </MiniRow>
          </ControlStack>
        </Group>

        <Group w={274} label="Alignment" launcher pl={10}>
          <ControlStack $pt={8} $gap={9}>
            <MiniRow>
              <Slot $w={21}><AlignLines widths={[12, 8]} off="c" /></Slot>
              <Slot $w={21}><AlignLines widths={[12, 12]} off="c" /></Slot>
              <Active $w={21}><AlignLines widths={[12, 12]} off="c" /></Active>
              <Sep $l={7} $r={6} />
              <Slot $w={18}><OrientIcon /></Slot>
              <Slot $w={12}><Chev /></Slot>
              <Sep $l={14} $r={8} />
              <Slot $w={16}><WrapIcon /></Slot>
              <FixedText $w={80}>&nbsp;Wrap Text</FixedText>
            </MiniRow>
            <MiniRow>
              <Slot $w={21}><AlignLines widths={[14, 10, 14, 10]} off="l" /></Slot>
              <Slot $w={21}><AlignLines widths={[14, 10, 14, 10]} off="c" /></Slot>
              <Slot $w={21}><AlignLines widths={[14, 10, 14, 10]} off="r" /></Slot>
              <Sep $l={7} $r={6} />
              <Slot $w={16}><IndentIcon rev /></Slot>
              <Slot $w={28}><IndentIcon /></Slot>
              <Sep $l={0} $r={8} />
              <Slot $w={12}><MergeIcon /></Slot>
              <FixedText $w={98}>&nbsp;&nbsp;Merge &amp; Center</FixedText>
              <Slot $w={12}><Chev /></Slot>
            </MiniRow>
          </ControlStack>
        </Group>

        <Group w={150} label="Number" launcher pl={9}>
          <ControlStack $pt={8} $gap={9}>
            <MiniRow><Select $w={134}>Custom<Chev /></Select></MiniRow>
            <MiniRow>
              <Slot $w={22}><Accounting /></Slot>
              <Slot $w={14}><Chev /></Slot>
              <Slot $w={24}><span style={{ fontSize: 16 }}>%</span></Slot>
              <Slot $w={20}><CommaMark /></Slot>
              <Sep $l={5} $r={5} />
              <Slot $w={20}><DecMark flip /></Slot>
              <Slot $w={22}><DecMark /></Slot>
            </MiniRow>
          </ControlStack>
        </Group>

        <Group w={593} label="Styles" pl={12}>
          <Big w={68} icon={<CondIcon />} lines={['Conditional', 'Formatting']} chev />
          <Big w={62} icon={<TableIcon />} lines={['Format as', 'Table']} chev />
          <Gallery>
            <GalleryGrid>
              {styleCells.map(c => (
                <StyleCell key={c.t} $bg={c.bg} $dark={c.dark} $picked={c.picked}>{c.t}</StyleCell>
              ))}
            </GalleryGrid>
            <Spin>
              <SpinBtn><Triangle dir="u" /></SpinBtn>
              <SpinBtn><Chev /></SpinBtn>
              <SpinBtn><Chev /></SpinBtn>
            </Spin>
          </Gallery>
        </Group>

        <Group w={144} label="Cells" pl={9}>
          <Big w={42} icon={<CellsIcon kind="insert" />} lines={['Insert']} />
          <Big w={42} icon={<CellsIcon kind="delete" />} lines={['Delete']} />
          <Big w={42} icon={<CellsIcon kind="format" />} lines={['Format']} />
        </Group>

        <Group w={200} label="Editing" pl={11}>
          <MiniCol $w={91} $gap={0.5}>
            <MiniRow><Slot $w={16}><span style={{ fontSize: 17, lineHeight: 1 }}>Σ</span></Slot><Slot $w={3} />AutoSum<Slot $w={22}><Chev /></Slot></MiniRow>
            <MiniRow><Slot $w={16}><FillDown /></Slot><Slot $w={3} />Fill<Slot $w={10}><Chev /></Slot></MiniRow>
            <MiniRow><Slot $w={16}><Eraser /></Slot><Slot $w={3} />Clear<Slot $w={10}><Chev /></Slot></MiniRow>
          </MiniCol>
          <Big w={44} icon={<SortIcon />} lines={['Sort &', 'Filter']} chev />
          <Big w={44} icon={<FindIcon />} lines={['Find &', 'Select']} chev />
        </Group>

        <Group w={58} label="Ideas">
          <Big w={58} icon={<Bolt />} lines={['Ideas']} />
        </Group>

        <Collapse><Chev s={9} /></Collapse>
      </Ribbon>

      <FormulaBar>
        <NameBox>E44<Triangle dir="d" /></NameBox>
        <Dots>⋮</Dots>
        <FxBox>
          <Slot $w={38}><svg width="11" height="11" viewBox="0 0 11 11" stroke="#a6a6a6"><path d="M1 1l9 9m0-9l-9 9" /></svg></Slot>
          <Slot $w={36}><svg width="12" height="11" viewBox="0 0 12 11" fill="none" stroke="#a6a6a6"><path d="M1 6l3 4 7-9" /></svg></Slot>
          <Slot $w={34}><FxMark>fx</FxMark></Slot>
        </FxBox>
        <FormulaInput><Chev s={9} /></FormulaInput>
      </FormulaBar>

      <Sheet>
        <Grid>
          <ColHead>
            <Corner>
              <svg width="22" height="21" viewBox="0 0 22 21"><path d="M22 0v21H0z" fill="#b4b4b4" /></svg>
            </Corner>
            <ColLetters>
              {letters.map(l => <Letter key={l} $on={l === 'E'}>{l}</Letter>)}
              <Letter />
            </ColLetters>
          </ColHead>

          <Line n={1}><Cell><TocLink>Table of Contents</TocLink></Cell></Line>
          <Line n={2} h={33.6}><Cell><SheetTitle>Administrative and Selling Expenses</SheetTitle></Cell></Line>
          <Line n={3} h={26.4}><Cell><SubTitle>ACME Ltd.</SubTitle></Cell></Line>
          <Line n={4} />
          <Line n={5}><Cell><Unit>in EUR</Unit></Cell></Line>
          <Line n={6} />
          <Line n={7} tone="navy" freeze>
            <Cell /><Cell /><Cell />
            {months.map(m => <Cell key={m}>{m}</Cell>)}
            <Cell $pad={5}>Total</Cell>
          </Line>
          <Line n={27}>
            <Cell $align="right">609</Cell><Cell $pad={4}>OTHER</Cell><Cell />
            <Numbers values={otherRow} color={red} />
          </Line>
          <Line n={28} />
          <Line n={29}>
            <Cell /><Cell>Commissions in HIRED SERVICES</Cell><Cell />
            <Numbers values={hiredRow} />
          </Line>
          <Line n={30} />
          <Line n={31}>
            <Cell /><Cell $bold>Total Selling Expenses</Cell><Cell />
            <Numbers values={totalRow} bold />
          </Line>
          <Line n={32} />
          <Line n={33} fillA aText="3" tone="amber"><Cell>SG&amp;A Optimizations</Cell></Line>
          <Line n={34} />
          <Line n={35} tone="navy">
            <Cell $align="right">614</Cell><Cell /><Cell />
            <HeaderNumbers />
          </Line>
          <Line n={36}>
            <Cell /><Cell>Wastage</Cell><Cell />
            <Numbers values={repeat('(50,000)')} color={blue} pad={3} />
          </Line>
          <Line n={37}>
            <Cell /><Cell>Hired services</Cell><Cell /><Cell />
            <Numbers values={repeat('(100,000)').slice(1)} color={blue} pad={3} />
          </Line>
          <Line n={38} />
          <Line n={39} h={26} tone="orange">
            <Cell>Total Admin Expenses Optimizations</Cell><Cell /><Cell />
            <Cell $align="right" $pad={3} $flag>(50,000)</Cell>
            <Numbers values={repeat('(150,000)').slice(1)} pad={3} />
          </Line>
          <Line n={40} h={26} />
          <Line n={41}>
            <Cell $bold>Gross Sales</Cell><Cell /><Cell />
            <Numbers values={salesRow} color={green} />
          </Line>
          <Line n={42} />
          <Line n={43} tone="navy">
            <Cell $align="right">615</Cell><Cell />
            <Cell $align="center">0</Cell>
            <HeaderNumbers />
          </Line>
          <Line n={44} on>
            <Cell /><Cell>Transport</Cell>
            <Cell $align="right" $pad={3} $color={blue}>(500,000)</Cell>
            <Cell $picked />
            {months.slice(1).map(m => <Cell key={m} />)}
            <Cell $flag />
          </Line>
          <Line n={45}>
            <Cell /><Cell>Reduced staff</Cell><Cell /><Cell />
            <Numbers values={repeat('(50,000)').slice(1)} color={blue} pad={3} />
          </Line>
          <Line n={46} />
          <Line n={47} h={26} tone="orange">
            <Cell>Total Admin Expenses Optimizations</Cell><Cell /><Cell />
            <Cell $align="right" $pad={28} $flag>-</Cell>
            <Numbers values={repeat('(50,000)').slice(1)} pad={3} />
          </Line>
          <Line n={48} h={25} />
          <Line n={49} />
          <Line n={50} />
        </Grid>
        <VScroll>
          <ScrollBtn><Triangle dir="u" /></ScrollBtn>
          <VGap $h={332} />
          <VThumb />
          <ScrollBtn><Triangle dir="d" c="#444" /></ScrollBtn>
        </VScroll>
      </Sheet>

      <SheetTabs>
        <TabNav><Triangle dir="l" c="#c0c0c0" /><Triangle dir="r" c="#c0c0c0" /></TabNav>
        {sheetTabs.map(([t, w]) => (
          <SheetTab key={t} $w={w} $on={t === 'SG&A-BU'}>{t}</SheetTab>
        ))}
        <AddSheet>
          <svg width="16" height="16" viewBox="0 0 16 16" fill="none" stroke="#777"><circle cx="8" cy="8" r="7" /><path d="M8 4v8M4 8h8" strokeWidth="1.400" /></svg>
        </AddSheet>
        <SplitDots>⋮</SplitDots>
        <HScroll>
          <HBtn><Triangle dir="l" c="#444" /></HBtn>
          <HThumb />
          <HRest />
          <HBtn><Triangle dir="r" c="#444" /></HBtn>
        </HScroll>
      </SheetTabs>

      <StatusBar>
        Ready
        <Slot $w={52}>
          <svg width="15" height="15" viewBox="0 0 15 15" fill="none" stroke="#666"><path d="M1 1h11v13H1zM1 4h11M3 6.500h6M3 9h4" /><circle cx="11" cy="11" r="3" fill="#f3f2f1" /></svg>
        </Slot>
        <StatusRight>
          <ViewBtn $on $w={40}>
            <svg width="14" height="20" viewBox="0 0 14 20" fill="none" stroke="#444"><path d="M.500 3h13v14H.500zM5 3v14M9.500 3v14M.500 7.500h13M.500 12.500h13" /></svg>
          </ViewBtn>
          <ViewBtn $w={40}>
            <svg width="13" height="20" viewBox="0 0 13 20" fill="none" stroke="#444"><path d="M.500 3h12v14H.500zM3.500 6h6v8h-6z" /></svg>
          </ViewBtn>
          <ViewBtn $w={40}>
            <svg width="14" height="20" viewBox="0 0 14 20" fill="none" stroke="#444"><path d="M.500 3h13v14H.500zM4.500 3v6h5V3" /></svg>
          </ViewBtn>
          <ZoomMinus width="9" height="3" viewBox="0 0 9 3"><path d="M0 1.500h9" stroke="#444" /></ZoomMinus>
          <ZoomTrack />
          <svg width="9" height="9" viewBox="0 0 9 9"><path d="M0 4.500h9M4.500 0v9" stroke="#444" /></svg>
          <ZoomPct>160%</ZoomPct>
        </StatusRight>
      </StatusBar>

      <Pointer width="16" height="16" viewBox="0 0 16 16">
        <path d="M5.500 1h5v4.500H15v5h-4.500V15h-5v-4.500H1v-5h4.500z" fill="#fff" stroke="#111" />
      </Pointer>
      <PauseBtn><i /><i /></PauseBtn>
      <Player>
        <Track>
          <Played style={{ width: 555 }} />
          <Buffered style={{ width: 14 }} />
          <TimeTip>05:04</TimeTip>
        </Track>
        <PlayerIcons>
          <SignalBars />
          <Gear />
          <Shrink />
        </PlayerIcons>
      </Player>
    </Page>
  );
};

export default App;
